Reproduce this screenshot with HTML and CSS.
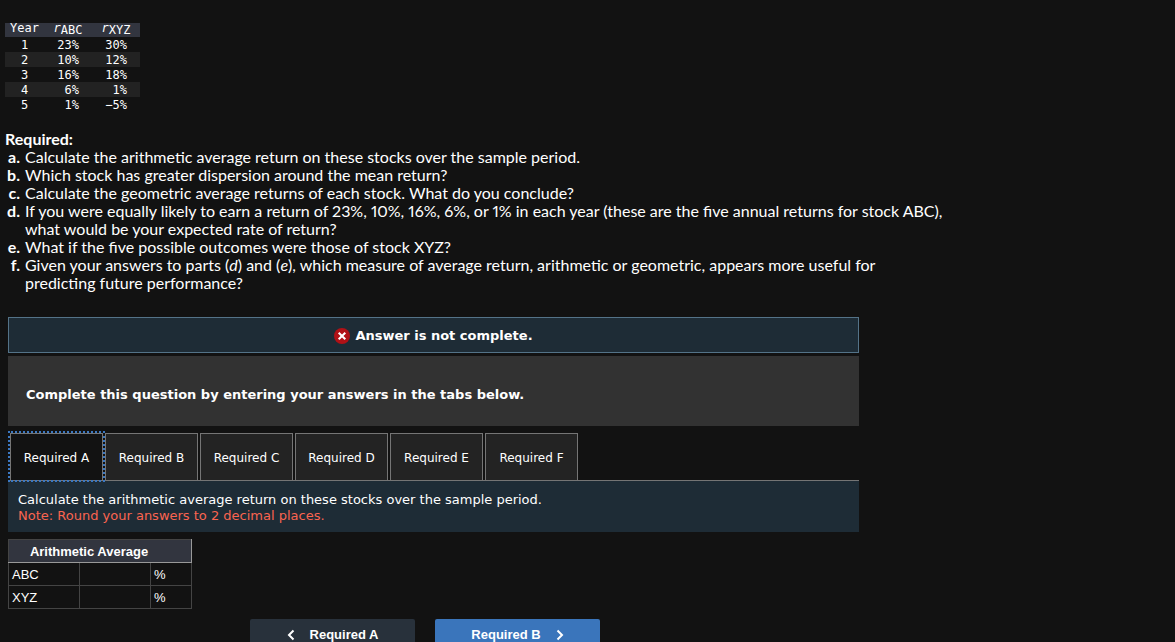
FILE: index.html
```html
<!DOCTYPE html>
<html lang="en">
<head>
  <meta charset="UTF-8">
  <meta name="viewport" content="width=device-width, initial-scale=1.0">
  <title>Stock Returns Question</title>
  <link rel="stylesheet" href="styles.css">
</head>
<body>
  <table class="returns">
    <thead>
      <tr>
        <th>Year</th>
        <th><i>r</i><sub>ABC</sub></th>
        <th><i>r</i><sub>XYZ</sub></th>
      </tr>
    </thead>
    <tbody>
      <tr><td>1</td><td>23%</td><td>30%</td></tr>
      <tr><td>2</td><td>10%</td><td>12%</td></tr>
      <tr><td>3</td><td>16%</td><td>18%</td></tr>
      <tr><td>4</td><td>6%</td><td>1%</td></tr>
      <tr><td>5</td><td>1%</td><td>−5%</td></tr>
    </tbody>
  </table>

  <div class="question">
    <strong>Required:</strong>
    <div class="parts">
      <b>a.</b>
      <span>Calculate the arithmetic average return on these stocks over the sample period.</span>
      <b>b.</b>
      <span>Which stock has greater dispersion around the mean return?</span>
      <b>c.</b>
      <span>Calculate the geometric average returns of each stock. What do you conclude?</span>
      <b>d.</b>
      <span>If you were equally likely to earn a return of 23%, 10%, 16%, 6%, or 1% in each year (these are the five annual returns for stock ABC),<br>what would be your expected rate of return?</span>
      <b>e.</b>
      <span>What if the five possible outcomes were those of stock XYZ?</span>
      <b>f.</b>
      <span>Given your answers to parts (<i>d</i>) and (<i>e</i>), which measure of average return, arithmetic or geometric, appears more useful for<br>predicting future performance?</span>
    </div>
  </div>

  <div class="answer">
    <div class="status">
      <svg class="status-icon" width="16" height="16" viewBox="0 0 16 16" aria-hidden="true">
        <circle cx="8" cy="8" r="8" fill="#b01116"/>
        <path d="M4.700 4.700l6.600 6.600M11.300 4.700l-6.600 6.600" stroke="#fff" stroke-width="2"/>
      </svg>
      <span>Answer is not complete.</span>
    </div>

    <div class="instructions">Complete this question by entering your answers in the tabs below.</div>

    <div class="tabs" role="tablist">
      <button type="button" role="tab" class="tab active" aria-selected="true">Required A</button>
      <button type="button" role="tab" class="tab">Required B</button>
      <button type="button" role="tab" class="tab">Required C</button>
      <button type="button" role="tab" class="tab">Required D</button>
      <button type="button" role="tab" class="tab">Required E</button>
      <button type="button" role="tab" class="tab">Required F</button>
    </div>

    <div class="panel">
      <div>Calculate the arithmetic average return on these stocks over the sample period.</div>
      <div class="note">Note: Round your answers to 2 decimal places.</div>
    </div>

    <table class="entry">
      <thead>
        <tr><th colspan="3">Arithmetic Average</th></tr>
      </thead>
      <tbody>
        <tr>
          <td class="name"><label for="abc">ABC</label></td>
          <td class="value"><input type="text" id="abc"></td>
          <td class="unit">%</td>
        </tr>
        <tr>
          <td class="name"><label for="xyz">XYZ</label></td>
          <td class="value"><input type="text" id="xyz"></td>
          <td class="unit">%</td>
        </tr>
      </tbody>
    </table>

    <div class="pager">
      <button type="button" class="prev">
        <svg width="8" height="12" viewBox="0 0 8 12" aria-hidden="true"><path d="M6.500 1.500L2 6l4.500 4.500" fill="none" stroke="#fff" stroke-width="2"/></svg>
        Required A
      </button>
      <button type="button" class="next">
        Required B
        <svg width="8" height="12" viewBox="0 0 8 12" aria-hidden="true"><path d="M1.500 1.500L6 6l-4.500 4.500" fill="none" stroke="#fff" stroke-width="2"/></svg>
      </button>
    </div>
  </div>
</body>
</html>
```
FILE: styles.css
```css
html {
  overflow: hidden;
}

body {
  margin: 0;
  padding: 23px 5px;
  background-color: #121212;
  color: #fff;
  font-family: "Liberation Sans", Arial, sans-serif;
  font-size: 13px;
}

table {
  border-collapse: collapse;
}

/* Yearly returns */
.returns {
  font: 12px/15px "DejaVu Sans Mono", monospace;
}

.returns th,
.returns td {
  width: 48px;
  height: 15px;
  padding: 0;
  box-sizing: border-box;
  font-weight: normal;
}

.returns th {
  height: 14px;
  line-height: 10px;
  vertical-align: top;
  background-color: #32353f;
}

.returns sub {
  font-size: 12px;
  line-height: 0;
  vertical-align: -2px;
}

.returns th:first-child,
.returns td:first-child {
  width: 39px;
  padding: 0;
  text-align: center;
}

.returns td {
  padding: 1px 13px 0 0;
  line-height: 14px;
  text-align: right;
}

.returns td:first-child {
  padding-top: 1px;
}

.returns tbody tr:nth-child(even) {
  background-color: #222;
}

/* Question text */
.question {
  margin-top: 18px;
  font: 16px/18px Lato, sans-serif;
  font-variant-numeric: proportional-nums;
}

.parts {
  display: grid;
  grid-template-columns: 15px 1fr;
  column-gap: 5px;
}

.parts b {
  text-align: right;
}

/* Answer area */
.answer {
  max-width: 851px;
  margin: 25px 3px 0;
}

.status {
  display: flex;
  align-items: center;
  justify-content: center;
  gap: 5px;
  padding: 10px 0 8px;
  border: 1px solid #547388;
  background-color: #1e2c36;
  font: bold 13px/16px "DejaVu Sans", Verdana, sans-serif;
}

.instructions {
  margin-top: 3px;
  padding: 31px 18px 23px;
  background-color: #323232;
  font: bold 13px/16px "DejaVu Sans", Verdana, sans-serif;
}

.tabs {
  display: flex;
  gap: 2px;
  margin-top: 7px;
  padding-left: 2px;
}

.tab {
  width: 93px;
  height: 47px;
  padding: 2px 0 0;
  border: 1px solid #757575;
  border-bottom: none;
  background-color: #232323;
  color: #fff;
  font: 12px/16px "DejaVu Sans", Verdana, sans-serif;
  cursor: pointer;
}

.tab.active {
  background-color: #121212;
  outline: 2px dotted #3b78c2;
}

.panel {
  padding: 11px 10px 8px;
  border-top: 1px solid #757575;
  background-color: #1e2c36;
  font: 13px/16px "DejaVu Sans", Verdana, sans-serif;
}

.note {
  color: #fa6450;
}

.entry {
  margin-top: 7px;
}

.entry th {
  height: 22px;
  padding: 0 22px 0 0;
  border: 1px solid #444;
  border-right-color: #999;
  border-bottom-color: #999;
  background-color: #32353f;
}

.entry td {
  height: 22px;
  padding: 0 3px;
  border: 1px solid #444;
}

.entry .name {
  width: 64px;
}

.entry .value {
  width: 70px;
  padding: 0;
}

.entry .unit {
  width: 34px;
}

.entry input {
  display: block;
  width: 100%;
  height: 20px;
  padding: 0 3px;
  box-sizing: border-box;
  border: none;
  background: none;
  color: #fff;
  font: inherit;
}

.pager {
  display: flex;
  justify-content: center;
  gap: 20px;
  margin-top: 10px;
  padding-right: 17px;
}

.pager button {
  display: flex;
  align-items: center;
  justify-content: center;
  gap: 15px;
  width: 165px;
  height: 32px;
  border: none;
  border-radius: 2px;
  color: #fff;
  font: bold 13px/16px "Liberation Sans", Arial, sans-serif;
  cursor: pointer;
}

.pager .prev {
  background-color: #28313b;
}

.pager .next {
  background-color: #3a75bb;
}
```
